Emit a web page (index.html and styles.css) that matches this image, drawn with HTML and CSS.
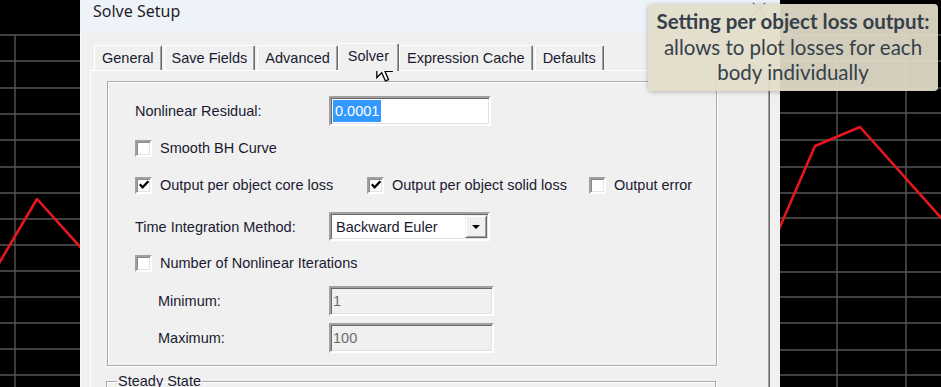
FILE: index.html
```html
<!DOCTYPE html>
<html>
<head>
<meta charset="utf-8">
<title>Solve Setup</title>
<link rel="stylesheet" href="styles.css">
</head>
<body>
<div class="screen">
  <svg class="plot" width="80" height="387" viewBox="0 0 80 387">
    <g class="grid">
      <line x1="0" y1="35" x2="80" y2="35"/>
      <line x1="0" y1="61" x2="80" y2="61"/>
      <line x1="0" y1="88" x2="80" y2="88"/>
      <line x1="0" y1="114" x2="80" y2="114"/>
      <line x1="0" y1="140" x2="80" y2="140"/>
      <line x1="0" y1="167" x2="80" y2="167"/>
      <line x1="0" y1="193" x2="80" y2="193"/>
      <line x1="0" y1="219" x2="80" y2="219"/>
      <line x1="0" y1="245" x2="80" y2="245"/>
      <line x1="0" y1="271" x2="80" y2="271"/>
      <line x1="0" y1="297" x2="80" y2="297"/>
      <line x1="0" y1="323" x2="80" y2="323"/>
      <line x1="0" y1="349" x2="80" y2="349"/>
      <line x1="0" y1="375" x2="80" y2="375"/>
      <line x1="15" y1="35" x2="15" y2="387"/>
    </g>
    <polyline class="trace" points="-2,265 37,199 82,249"/>
  </svg>

  <div class="dialog">
    <div class="titlebar">
      <span class="title">Solve Setup</span>
      <svg class="close" width="14" height="14" viewBox="0 0 14 14"><path d="M1 1 L13 13 M13 1 L1 13"/></svg>
    </div>
    <div class="dlg-body">
      <div class="tabs">
        <div class="tab">General</div>
        <div class="tab">Save Fields</div>
        <div class="tab">Advanced</div>
        <div class="tab active">Solver</div>
        <div class="tab">Expression Cache</div>
        <div class="tab">Defaults</div>
      </div>
      <div class="panel">
        <div class="group">
          <div class="row row-residual">
            <span class="label">Nonlinear Residual:</span>
            <div class="field"><span class="selected">0.0001</span></div>
          </div>
          <div class="row row-smooth">
            <div class="check"><span class="box"></span>Smooth BH Curve</div>
          </div>
          <div class="row row-output">
            <div class="check col-a"><span class="box"><svg class="tick" width="12" height="12" viewBox="0 0 12 12"><path d="M1.8 5.2 L4.6 8.4 L10.4 2.2"/></svg></span>Output per object core loss</div>
            <div class="check col-b"><span class="box"><svg class="tick" width="12" height="12" viewBox="0 0 12 12"><path d="M1.8 5.2 L4.6 8.4 L10.4 2.2"/></svg></span>Output per object solid loss</div>
            <div class="check"><span class="box"></span>Output error</div>
          </div>
          <div class="row row-time">
            <span class="label">Time Integration Method:</span>
            <div class="combo">
              <span class="combo-text">Backward Euler</span>
              <span class="combo-btn"><svg width="8" height="4" viewBox="0 0 8 4"><polygon points="0,0 8,0 4,4"/></svg></span>
            </div>
          </div>
          <div class="row row-iter">
            <div class="check"><span class="box"></span>Number of Nonlinear Iterations</div>
          </div>
          <div class="row row-min">
            <span class="label sub">Minimum:</span>
            <div class="field disabled">1</div>
          </div>
          <div class="row row-max">
            <span class="label sub">Maximum:</span>
            <div class="field disabled">100</div>
          </div>
        </div>
        <fieldset class="steady"><legend>Steady State</legend></fieldset>
      </div>
    </div>
  </div>

  <svg class="plot" width="161" height="387" viewBox="0 0 161 387">
    <g class="grid">
      <line x1="0" y1="35" x2="161" y2="35"/>
      <line x1="0" y1="61" x2="161" y2="61"/>
      <line x1="0" y1="88" x2="161" y2="88"/>
      <line x1="0" y1="113" x2="161" y2="113"/>
      <line x1="0" y1="140" x2="161" y2="140"/>
      <line x1="0" y1="167" x2="161" y2="167"/>
      <line x1="0" y1="193" x2="161" y2="193"/>
      <line x1="0" y1="218" x2="161" y2="218"/>
      <line x1="0" y1="245" x2="161" y2="245"/>
      <line x1="0" y1="272" x2="161" y2="272"/>
      <line x1="0" y1="297" x2="161" y2="297"/>
      <line x1="0" y1="323" x2="161" y2="323"/>
      <line x1="0" y1="350" x2="161" y2="350"/>
      <line x1="0" y1="375" x2="161" y2="375"/>
      <line x1="57" y1="35" x2="57" y2="387"/>
      <line x1="126" y1="35" x2="126" y2="387"/>
    </g>
    <polyline class="trace" points="-1,229 35,146 80,127 163,220"/>
  </svg>

  <div class="tooltip">
    <div class="tt-title">Setting per object loss output:</div>
    <div class="tt-text">allows to plot losses for each<br>body individually</div>
  </div>

  <svg class="cursor" width="17" height="26" viewBox="0 0 13 20">
    <path d="M0.6 0.6 L0.6 16.6 L4.4 12.8 L7.2 19.2 L9.6 18.2 L6.9 11.9 L12.2 11.9 Z"/>
  </svg>
</div>
</body>
</html>
```

FILE: styles.css
```css
* {
  box-sizing: border-box;
}

html,
body {
  margin: 0;
  padding: 0;
  background: #000;
}

body {
  font-family: "Liberation Sans", Arial, sans-serif;
}

.screen {
  position: relative;
  width: 941px;
  height: 387px;
  overflow: hidden;
  display: flex;
  background: #000;
}

/* background plots */
.plot {
  flex: none;
  display: block;
}

.grid line {
  stroke: #565656;
  stroke-width: 1.4;
}

.trace {
  fill: none;
  stroke: #e5161e;
  stroke-width: 2.6;
  stroke-linejoin: round;
}

/* dialog */
.dialog {
  flex: none;
  width: 700px;
  height: 387px;
  background: #f0f0f0;
  display: flex;
  flex-direction: column;
  box-shadow: inset 1px 0 #f8f8f8;
}

.titlebar {
  flex: none;
  height: 32px;
  background: #eef2f9;
  display: flex;
  align-items: flex-start;
  padding-left: 13px;
}

.title {
  font-family: "Noto Sans", "Open Sans", sans-serif;
  font-size: 16px;
  line-height: 22px;
  color: #1e1e1e;
}

.close {
  margin-left: auto;
  margin-right: 14px;
  margin-top: 2px;
}

.close path {
  stroke: #555;
  stroke-width: 1.2;
  fill: none;
}

.dlg-body {
  flex: 1;
  min-height: 0;
  display: flex;
  flex-direction: column;
  padding: 11px 10px 0 10px;
}

.tabs {
  flex: none;
  height: 27px;
  display: flex;
  align-items: flex-end;
  padding-left: 4px;
  position: relative;
  z-index: 1;
}

.tab {
  height: 25px;
  padding: 0 7px;
  margin-right: 2px;
  display: flex;
  align-items: center;
  font-size: 14.5px;
  color: #1a1a30;
  background: #f0f0f0;
  border-top: 1px solid #fff;
  border-left: 1px solid #fff;
  border-right: 1px solid #696969;
  border-radius: 2px 2px 0 0;
  box-shadow: inset -1px 0 #a0a0a0;
}

.tab.active {
  height: 28px;
  margin: 0 0 -1px -2px;
  padding: 0 9px 3px;
}

.panel {
  flex: 1;
  min-height: 0;
  border-top: 1px solid #fff;
  border-left: 1px solid #fff;
  border-right: 1px solid #696969;
  box-shadow: inset -1px 0 #a0a0a0;
  padding: 10px 0 0 16px;
}

.group {
  width: 610px;
  height: 285px;
  border: 1px solid #a9a9a9;
  box-shadow: 1px 1px 0 #fff, inset 1px 1px 0 #fff;
  padding: 14px 0 0 27px;
  display: flex;
  flex-direction: column;
}

.row {
  flex: none;
  display: flex;
  align-items: center;
  font-size: 14.5px;
  color: #1a1a30;
}

.row-residual { height: 30px; }
.row-smooth { height: 22px; margin-top: 11px; }
.row-output { height: 22px; margin-top: 15px; }
.row-time { height: 29px; margin-top: 16px; }
.row-iter { height: 22px; margin-top: 11px; }
.row-min { height: 30px; margin-top: 12px; }
.row-max { height: 30px; margin-top: 7px; }

.label {
  flex: none;
  width: 194px;
}

.label.sub {
  width: 171px;
  margin-left: 23px;
}

.field {
  flex: none;
  width: 162px;
  height: 30px;
  border: 2px solid;
  border-color: #a0a0a0 #fff #fff #a0a0a0;
  box-shadow: inset 1px 1px #696969, inset -1px -1px #e3e3e3;
  background: #fff;
  padding-left: 2px;
  display: flex;
  align-items: center;
}

.field.disabled {
  width: 165px;
  background: #f0f0f0;
  color: #6d6d6d;
}

.selected {
  background: #3399ff;
  color: #fff;
  line-height: 22px;
  padding: 0 2px;
}

.combo {
  flex: none;
  width: 161px;
  height: 29px;
  border: 2px solid;
  border-color: #a0a0a0 #fff #fff #a0a0a0;
  box-shadow: inset 1px 1px #696969, inset -1px -1px #e3e3e3;
  background: #fff;
  padding: 1px 1px 1px 5px;
  display: flex;
  align-items: center;
}

.combo-text {
  flex: 1;
}

.combo-btn {
  flex: none;
  width: 22px;
  height: 23px;
  background: #f0f0f0;
  border: 1px solid;
  border-color: #f0f0f0 #696969 #696969 #f0f0f0;
  box-shadow: inset 1px 1px #fff, inset -1px -1px #a0a0a0;
  display: flex;
  align-items: center;
  justify-content: center;
}

.combo-btn polygon {
  fill: #000;
}

.check {
  flex: none;
  display: flex;
  align-items: center;
}

.col-a { width: 232px; }
.col-b { width: 222px; }

.box {
  flex: none;
  width: 17px;
  height: 17px;
  margin-right: 8px;
  border: 2px solid;
  border-color: #a0a0a0 #fff #fff #a0a0a0;
  box-shadow: inset 1px 1px #8a8a8a, inset -1px -1px #e3e3e3;
  background: #fff;
  display: flex;
  align-items: center;
  justify-content: center;
}

.tick path {
  fill: none;
  stroke: #000;
  stroke-width: 2.3;
}

.steady {
  width: 610px;
  height: 80px;
  margin: 7px 0 0 -1px;
  padding: 0;
  border: 1px solid #a9a9a9;
  box-shadow: 1px 1px 0 #fff, inset 1px 1px 0 #fff;
}

.steady legend {
  margin-left: 10px;
  padding: 0 1px;
  font-size: 14.5px;
  line-height: 16px;
  color: #1a1a30;
}

/* overlays */
.tooltip {
  position: absolute;
  left: 648px;
  top: 4px;
  width: 290px;
  height: 87px;
  padding-top: 5px;
  background: rgba(226, 222, 201, 0.93);
  border-radius: 4px;
  box-shadow: 0 1px 5px rgba(0, 0, 0, 0.25);
  font-family: Lato, "Noto Sans", sans-serif;
  font-size: 20.5px;
  line-height: 25.5px;
  text-align: center;
  color: #36404a;
}

.tt-title {
  font-weight: 700;
}

.cursor {
  position: absolute;
  left: 376px;
  top: 56px;
}

.cursor path {
  fill: #fff;
  stroke: #000;
  stroke-width: 1;
  stroke-linejoin: miter;
}
```
